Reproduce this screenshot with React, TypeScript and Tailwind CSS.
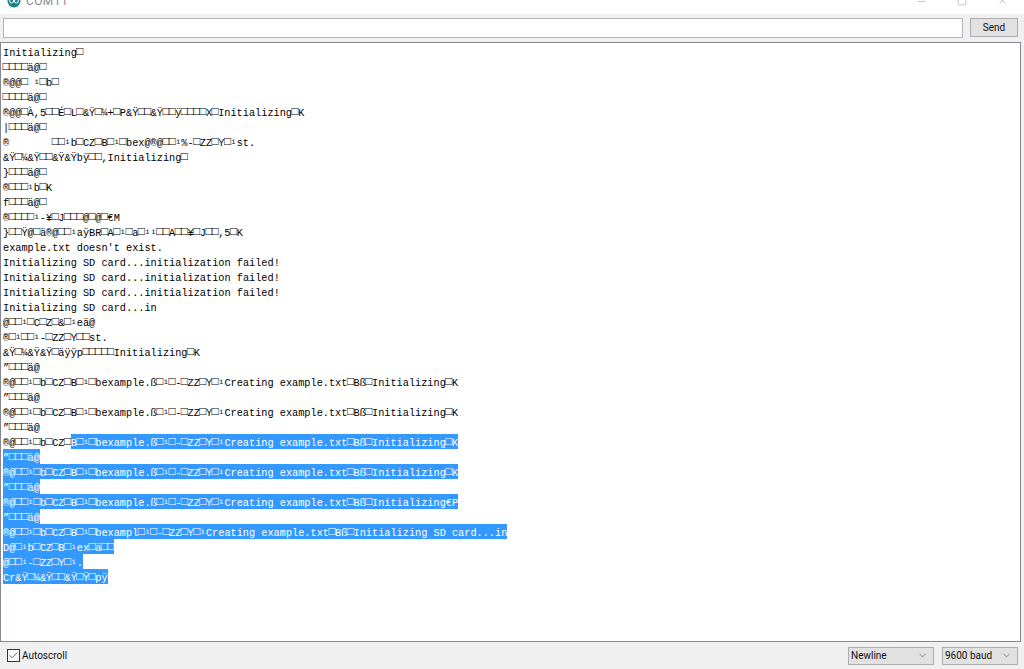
import { ChevronDown, Minus, Square, X, Check } from "lucide-react";

const mono = "font-['Liberation_Mono','DejaVu_Sans_Mono',monospace] text-[10.25px] leading-[19px] whitespace-pre";

// [plain text, selected text]
const lines: [string, string?][] = [
  ["Initializing□"],
  ["□□□□ä@□"],
  ["®@@□ ¹□b□"],
  ["□□□□ä@□"],
  ["®@@□À,5□□É□L□&Ÿ□¼+□P&Ÿ□□&Ÿ□□ÿ□□□□X□Initializing□K"],
  ["|□□□ä@□"],
  ["®       □□¹b□CZ□B□¹□bex@®@□□¹%-□ZZ□Y□¹st."],
  ["&Ÿ□¼&Ÿ□□&Ÿ&Ÿbÿ□□,Initializing□"],
  ["}□□□ä@□"],
  ["®□□□¹b□K"],
  ["f□□□ä@□"],
  ["®□□□□¹-¥□J□□□@□@□€M"],
  ["}□□Ÿ@□ä®@□□¹aÿBR□A□¹□a□¹¹□□A□□¥□J□□,5□K"],
  ["example.txt doesn't exist."],
  ["Initializing SD card...initialization failed!"],
  ["Initializing SD card...initialization failed!"],
  ["Initializing SD card...initialization failed!"],
  ["Initializing SD card...in"],
  ["@□□¹□C□Z□&□¹eä@"],
  ["®□¹□□¹-□ZZ□Y□□st."],
  ["&Ÿ□¼&Ÿ&Ÿ□äÿÿp□□□□□Initializing□K"],
  ["”□□□ä@"],
  ["®@□□¹□b□CZ□B□¹□bexample.ß□¹□-□ZZ□Y□¹Creating example.txt□Bß□Initializing□K"],
  ["”□□□ä@"],
  ["®@□□¹□b□CZ□B□¹□bexample.ß□¹□-□ZZ□Y□¹Creating example.txt□Bß□Initializing□K"],
  ["”□□□ä@"],
  ["®@□□¹□b□CZ□", "B□¹□bexample.ß□¹□-□ZZ□Y□¹Creating example.txt□Bß□Initializing□K"],
  ["", "”□□□ä@"],
  ["", "®@□□¹□b□CZ□B□¹□bexample.ß□¹□-□ZZ□Y□¹Creating example.txt□Bß□Initializing□K"],
  ["", "”□□□ä@"],
  ["", "®@□□¹□b□CZ□B□¹□bexample.ß□¹□-□ZZ□Y□¹Creating example.txt□Bß□Initializing€P"],
  ["", "”□□□ä@"],
  ["", "®@□□¹□b□CZ□B□¹□bexampl□¹□-□ZZ□Y□¹Creating example.txt□Bß□Initializing SD card...in"],
  ["", "D@□¹b□CZ□B□¹ex□ä□□"],
  ["", "@□□¹-□ZZ□Y□¹."],
  ["", "Cr&Ÿ□¼&Ÿ□□&Ÿ□Ÿ□pÿ"],
];

// the missing-glyph boxes are taller in the reference than the font's own □
function Glyphs({ text }: { text: string }) {
  return (
    <>
      {text.split(/(□)/).map((part, i) =>
        part === "□" ? (
          <span key={i} className="inline-block w-[6.15px] h-[15px] text-[12px] leading-[17px] -indent-[0.5px] align-top">
            □
          </span>
        ) : (
          part
        )
      )}
    </>
  );
}

function Dropdown({ label, width }: { label: string; width: string }) {
  return (
    <div className={`${width} h-[18px] flex items-center justify-between pl-[2px] pr-[5px] bg-[#e1e1e1] border border-[#adadad] text-[10px] text-[#111]`}>
      <span>{label}</span>
      <ChevronDown size={11} strokeWidth={1.25} className="text-[#444]" />
    </div>
  );
}

export default function App() {
  return (
    <div className="w-[1024px] h-[669px] flex flex-col overflow-hidden bg-[#f0f0f0] font-['Roboto',Arial,sans-serif]">
      {/* title bar, cut off at the top of the shot */}
      <div className="h-[14px] shrink-0 bg-white overflow-hidden flex items-end">
        <div className="h-[14px] w-full flex items-start pl-[7px] pr-[16px]">
          <div className="-mt-[6px] flex items-center gap-[5px]">
            <svg width="14" height="14" viewBox="0 0 14 14">
              <circle cx="7" cy="7" r="6.5" fill="#17818c" />
              <circle cx="4.6" cy="7" r="2" fill="none" stroke="#fff" strokeWidth="1" />
              <circle cx="9.4" cy="7" r="2" fill="none" stroke="#fff" strokeWidth="1" />
            </svg>
            <span className="text-[12px] leading-[14px] text-[#8a8a8a] tracking-[0.4px]">COM11</span>
          </div>
          <div className="ml-auto flex items-start gap-[30px] text-[#777]">
            <Minus size={11} strokeWidth={1} className="-mt-[4px]" />
            <Square size={10} strokeWidth={1} className="-mt-[4px]" />
            <X size={11} strokeWidth={1} className="-mt-[5px]" />
          </div>
        </div>
      </div>

      {/* send row */}
      <div className="h-[28px] shrink-0 flex items-start gap-[7px] pl-[3px] pr-[6px] pt-[4px]">
        <input className="w-[960px] h-[20px] bg-white border border-[#b4b4b4] outline-none" />
        <div className="w-[48px] h-[19px] flex items-center justify-center bg-[#e1e1e1] border border-[#adadad] text-[10px] text-[#111]">
          Send
        </div>
      </div>

      {/* output */}
      <div className="w-[1021px] h-[600px] shrink-0 bg-white border border-[#828790] pt-[1px] pl-[2px] overflow-hidden">
        {lines.map(([plain, selected], i) => (
          <div key={i} className={`${mono} h-[15px] text-black`}>
            <Glyphs text={plain} />
            {selected && (
              <span className="bg-[#3399ff] text-white inline-block h-[15px]">
                <Glyphs text={selected} />
              </span>
            )}
          </div>
        ))}
      </div>

      {/* footer */}
      <div className="flex-1 flex items-center pl-[7px] pr-[6px]">
        <div className="w-[13px] h-[13px] border border-[#333] bg-white flex items-center justify-center">
          <Check size={11} strokeWidth={1.5} className="text-[#222]" />
        </div>
        <span className="ml-[2px] text-[10px] text-[#111]">Autoscroll</span>
        <div className="ml-auto flex items-center gap-[8px]">
          <Dropdown label="Newline" width="w-[86px]" />
          <Dropdown label="9600 baud" width="w-[76px]" />
        </div>
      </div>
    </div>
  );
}
